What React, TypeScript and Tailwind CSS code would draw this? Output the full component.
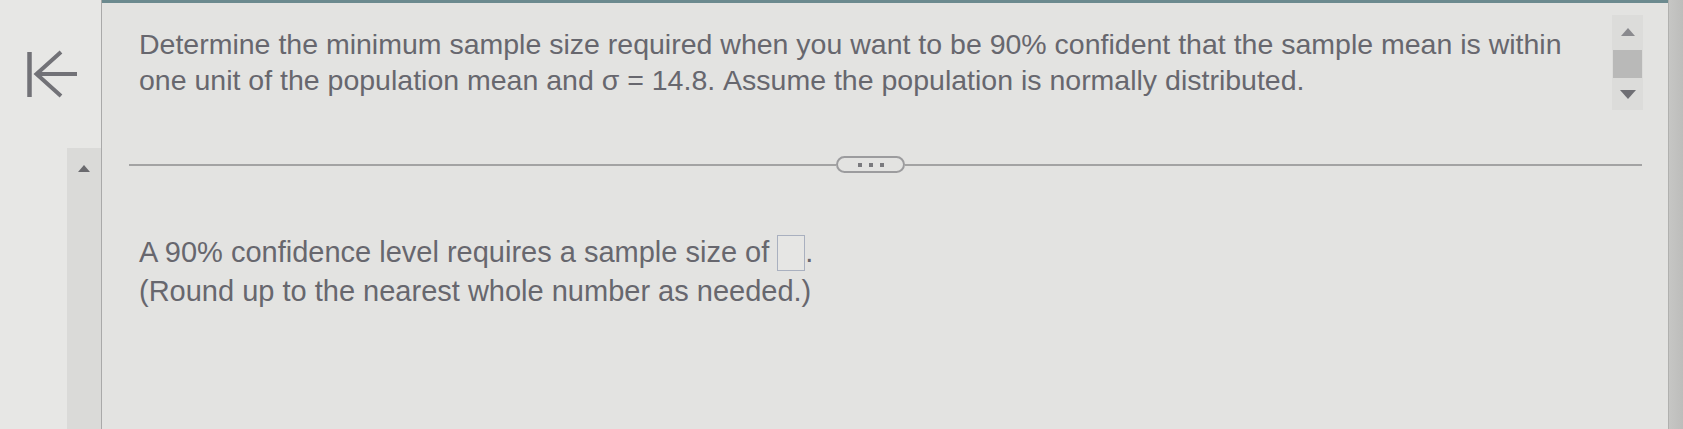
import React from "react";

export default function App() {
  return (
    <div className="w-[1683px] h-[429px] flex overflow-hidden bg-[#e3e3e1] font-['Liberation_Sans',Arial,sans-serif] text-[#67676e]">
      {/* Left column */}
      <div className="w-[102px] shrink-0 bg-[#e7e7e5] border-r border-[#a9a9a9] flex flex-col">
        <div className="h-[148px] shrink-0 pl-[25px] pt-[48px]">
          <svg width="56" height="52" viewBox="0 0 56 52" fill="none" stroke="#727277" strokeLinecap="butt">
            <line x1="4.5" y1="4" x2="4.5" y2="49" strokeWidth="4.5" />
            <line x1="12" y1="26" x2="52" y2="26" strokeWidth="4" />
            <polyline points="36,4 11.5,26 36,48" strokeWidth="4" strokeLinejoin="miter" />
          </svg>
        </div>
        <div className="ml-[67px] flex-1 bg-[#dadad8] flex justify-center pt-[17px]">
          <div className="w-0 h-0 border-l-[6px] border-r-[6px] border-b-[7px] border-l-transparent border-r-transparent border-b-[#6a6a6e]" />
        </div>
      </div>

      {/* Main */}
      <div className="flex-1 flex flex-col border-t-[3px] border-[#6c8a8f]">
        <div className="h-[153px] shrink-0 flex">
          <p className="flex-1 pl-[37px] pt-[24px] text-[28.5px] leading-[35.5px]">
            Determine the minimum sample size required when you want to be 90% confident that the sample mean is within one unit of the population mean and σ = 14.8. Assume the population is normally distributed.
          </p>
          <div className="w-[31px] mr-[25px] mt-[12px] h-[95px] bg-[#dcdcda] flex flex-col items-center">
            <div className="mt-[13px] w-0 h-0 border-l-[7px] border-r-[7px] border-b-[8px] border-l-transparent border-r-transparent border-b-[#8a8a8e]" />
            <div className="mt-[14px] w-[29px] h-[28px] bg-[#b9b9b8]" />
            <div className="mt-[12px] w-0 h-0 border-l-[8px] border-r-[8px] border-t-[9px] border-l-transparent border-r-transparent border-t-[#6f6f74]" />
          </div>
        </div>

        <div className="h-[17px] shrink-0 flex items-center ml-[27px] mr-[26px]">
          <div className="w-[707px] h-[2px] bg-[#a3a3a3]" />
          <div className="w-[69px] h-[17px] rounded-full border-2 border-[#9c9c9e] flex items-center justify-center gap-[7px]">
            <span className="w-[4px] h-[4px] bg-[#7a7a7e]" />
            <span className="w-[4px] h-[4px] bg-[#7a7a7e]" />
            <span className="w-[4px] h-[4px] bg-[#7a7a7e]" />
          </div>
          <div className="flex-1 h-[2px] bg-[#a3a3a3]" />
        </div>

        <div className="pl-[37px] pt-[60px] text-[29px] leading-[39px]">
          <p>
            A 90% confidence level requires a sample size of{" "}
            <span className="inline-block w-[28px] h-[36px] border border-[#a9b0bf] bg-[#e6e6e4] align-[-9px]" />
            .
          </p>
          <p>(Round up to the nearest whole number as needed.)</p>
        </div>
      </div>

      {/* Right edge */}
      <div className="w-[15px] shrink-0 bg-gradient-to-r from-[#c6c6c4] to-[#bdbdbb] border-l border-[#b0b0ae]" />
    </div>
  );
}
